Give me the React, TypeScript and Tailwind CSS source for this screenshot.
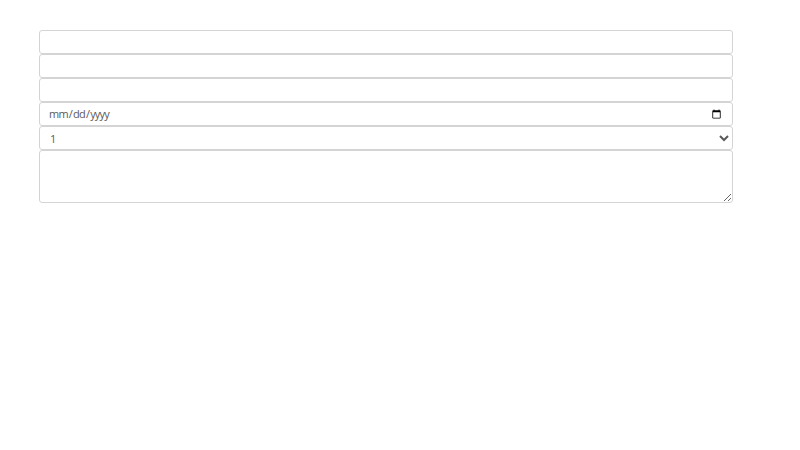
export default function App() {
  return (
    <div className="min-h-[450px] bg-white pt-[30px] pl-[39px] font-['Open_Sans',sans-serif] text-[11px] text-[#5a5a5a]">
      <form className="flex w-[694px] flex-col">
        <input type="text" className="h-6 rounded-[3px] border border-[#d4d4d4] px-2" />
        <input type="text" className="h-6 rounded-[3px] border border-[#d4d4d4] px-2" />
        <input type="text" className="h-6 rounded-[3px] border border-[#d4d4d4] px-2" />
        <input type="date" className="h-6 rounded-[3px] border border-[#d4d4d4] px-2 tracking-[-0.8px]" />
        <select className="h-6 rounded-[3px] border border-[#d4d4d4] px-[6px]">
          <option>1</option>
          <option>2</option>
          <option>3</option>
        </select>
        <textarea className="h-[53px] rounded-[3px] border border-[#d4d4d4] px-2 py-1" />
      </form>
    </div>
  );
}
